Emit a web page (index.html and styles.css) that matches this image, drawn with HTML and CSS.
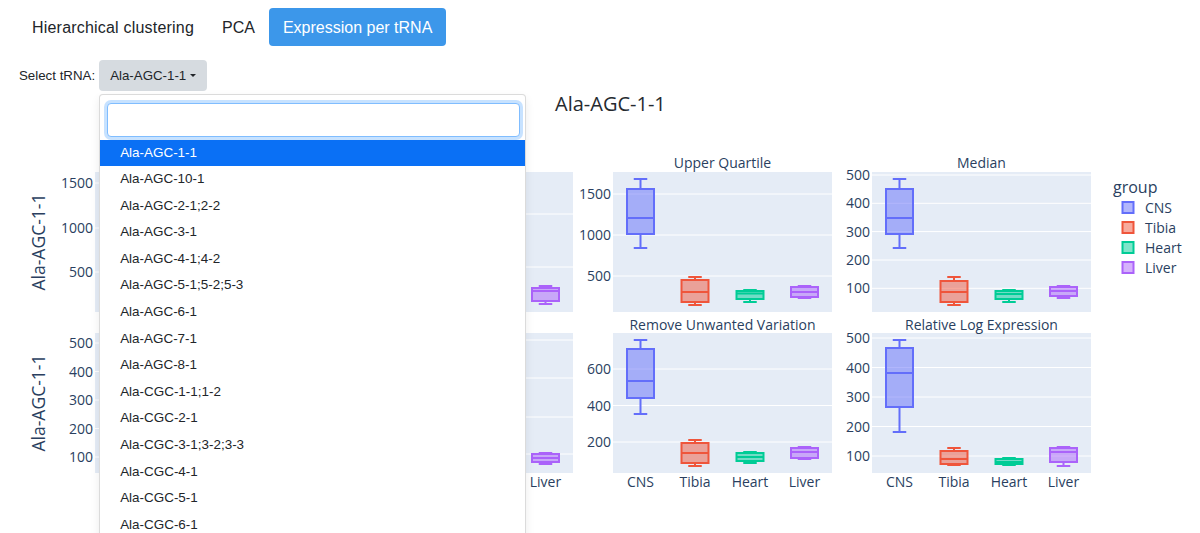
FILE: index.html
```html
<!DOCTYPE html>
<html lang="en">
<head>
<meta charset="utf-8">
<title>tRNA expression</title>
<link rel="stylesheet" href="styles.css">
</head>
<body>
<nav class="tabs">
  <a class="tab tab-wide">Hierarchical clustering</a>
  <a class="tab">PCA</a>
  <a class="tab active">Expression per tRNA</a>
</nav>
<div class="controls">
  <span class="label">Select tRNA:</span>
  <div class="picker">
    <button class="picker-btn">Ala-AGC-1-1<span class="caret"></span></button>
    <div class="menu">
      <div class="search"><input class="search-input" type="text"></div>
      <ul class="options">
        <li class="option selected">Ala-AGC-1-1</li>
        <li class="option">Ala-AGC-10-1</li>
        <li class="option">Ala-AGC-2-1;2-2</li>
        <li class="option">Ala-AGC-3-1</li>
        <li class="option">Ala-AGC-4-1;4-2</li>
        <li class="option">Ala-AGC-5-1;5-2;5-3</li>
        <li class="option">Ala-AGC-6-1</li>
        <li class="option">Ala-AGC-7-1</li>
        <li class="option">Ala-AGC-8-1</li>
        <li class="option">Ala-CGC-1-1;1-2</li>
        <li class="option">Ala-CGC-2-1</li>
        <li class="option">Ala-CGC-3-1;3-2;3-3</li>
        <li class="option">Ala-CGC-4-1</li>
        <li class="option">Ala-CGC-5-1</li>
        <li class="option">Ala-CGC-6-1</li>
      </ul>
    </div>
  </div>
</div>
<div class="figure">
<svg class="chart" width="1200" height="442" viewBox="0 91 1200 442" xmlns="http://www.w3.org/2000/svg">
  <!-- plot backgrounds -->
  <rect class="bg" x="95" y="172" width="219" height="140"/>
  <rect class="bg" x="354" y="172" width="219" height="140"/>
  <rect class="bg" x="613" y="172" width="219" height="140"/>
  <rect class="bg" x="872" y="172" width="219" height="140"/>
  <rect class="bg" x="95" y="333" width="219" height="140"/>
  <rect class="bg" x="354" y="333" width="219" height="140"/>
  <rect class="bg" x="613" y="333" width="219" height="140"/>
  <rect class="bg" x="872" y="333" width="219" height="140"/>

  <!-- gridlines -->
  <path class="grid" d="M95,183H314M95,228H314M95,272H314
    M95,343H314M95,371.5H314M95,400H314M95,428.5H314M95,457H314
    M354,214H573M354,267H573
    M354,340H573M354,378H573M354,417H573M354,454H573
    M613,194H832M613,235H832M613,276H832
    M613,369H832M613,405.5H832M613,442H832
    M872,175H1091M872,203.3H1091M872,231.6H1091M872,260H1091M872,288.3H1091
    M872,338H1091M872,367.5H1091M872,397H1091M872,426.5H1091M872,456H1091"/>

  <!-- main title -->
  <text class="title" x="555" y="111">Ala-AGC-1-1</text>

  <!-- subplot titles -->
  <text class="subtitle" x="722.5" y="168">Upper Quartile</text>
  <text class="subtitle" x="981.5" y="168">Median</text>
  <text class="subtitle" x="722.5" y="330">Remove Unwanted Variation</text>
  <text class="subtitle" x="981.5" y="330">Relative Log Expression</text>

  <!-- y axis titles -->
  <text class="ytitle" transform="translate(44.5,242) rotate(-90)">Ala-AGC-1-1</text>
  <text class="ytitle" transform="translate(44.5,403) rotate(-90)">Ala-AGC-1-1</text>

  <!-- y tick labels -->
  <g class="ytick">
    <text x="93" y="188">1500</text>
    <text x="93" y="233">1000</text>
    <text x="93" y="277">500</text>
    <text x="93" y="348">500</text>
    <text x="93" y="376.5">400</text>
    <text x="93" y="405">300</text>
    <text x="93" y="433.5">200</text>
    <text x="93" y="462">100</text>

    <text x="611" y="199">1500</text>
    <text x="611" y="240">1000</text>
    <text x="611" y="281">500</text>
    <text x="611" y="374">600</text>
    <text x="611" y="410.5">400</text>
    <text x="611" y="447">200</text>

    <text x="870" y="180">500</text>
    <text x="870" y="208.3">400</text>
    <text x="870" y="236.6">300</text>
    <text x="870" y="265">200</text>
    <text x="870" y="293.3">100</text>
    <text x="870" y="343">500</text>
    <text x="870" y="372.5">400</text>
    <text x="870" y="402">300</text>
    <text x="870" y="431.5">200</text>
    <text x="870" y="461">100</text>
  </g>

  <!-- x tick labels -->
  <g class="xtick">
    <text x="545.5" y="487">Liver</text>
    <text x="640.5" y="487">CNS</text>
    <text x="695" y="487">Tibia</text>
    <text x="750" y="487">Heart</text>
    <text x="804.5" y="487">Liver</text>
    <text x="899.5" y="487">CNS</text>
    <text x="954" y="487">Tibia</text>
    <text x="1009" y="487">Heart</text>
    <text x="1063.5" y="487">Liver</text>
  </g>

  <!-- boxes: second column (mostly under the menu) -->
  <path class="box b-liver" d="M532,288H559V301H532Z M532,291H559 M545.5,288V286 M538.75,286H552.25 M545.5,301V304 M538.75,304H552.25"/>
  <path class="box b-liver" d="M532,454H559V462H532Z M532,458H559 M545.5,454V453 M538.75,453H552.25 M545.5,462V464 M538.75,464H552.25"/>

  <!-- Upper Quartile -->
  <path class="box b-cns" d="M627,189H654V234H627Z M627,218H654 M640.5,189V179 M633.75,179H647.25 M640.5,234V248 M633.75,248H647.25"/>
  <path class="box b-tibia" d="M681.5,280H708.5V302H681.5Z M681.5,292H708.5 M695,280V277 M688.25,277H701.75 M695,302V305 M688.25,305H701.75"/>
  <path class="box b-heart" d="M736.5,291H763.5V299H736.5Z M736.5,293.5H763.5 M750,291V290 M743.25,290H756.75 M750,299V302 M743.25,302H756.75"/>
  <path class="box b-liver" d="M791,287H818V297H791Z M791,292H818 M804.5,287V286 M797.75,286H811.25 M804.5,297V298 M797.75,298H811.25"/>

  <!-- Median -->
  <path class="box b-cns" d="M886,189H913V234H886Z M886,218H913 M899.5,189V179 M892.75,179H906.25 M899.5,234V248 M892.75,248H906.25"/>
  <path class="box b-tibia" d="M940.5,281H967.5V302H940.5Z M940.5,292H967.5 M954,281V277 M947.25,277H960.75 M954,302V305 M947.25,305H960.75"/>
  <path class="box b-heart" d="M995.5,291H1022.5V299H995.5Z M995.5,294H1022.5 M1009,291V290 M1002.25,290H1015.75 M1009,299V302 M1002.25,302H1015.75"/>
  <path class="box b-liver" d="M1050,287H1077V296H1050Z M1050,291H1077 M1063.5,287V286 M1056.75,286H1070.25 M1063.5,296V298 M1056.75,298H1070.25"/>

  <!-- Remove Unwanted Variation -->
  <path class="box b-cns" d="M627,349H654V398H627Z M627,381H654 M640.5,349V340 M633.75,340H647.25 M640.5,398V414 M633.75,414H647.25"/>
  <path class="box b-tibia" d="M681.5,443H708.5V463H681.5Z M681.5,453H708.5 M695,443V440 M688.25,440H701.75 M695,463V466 M688.25,466H701.75"/>
  <path class="box b-heart" d="M736.5,453H763.5V461H736.5Z M736.5,457H763.5 M750,453V452 M743.25,452H756.75 M750,461V463 M743.25,463H756.75"/>
  <path class="box b-liver" d="M791,448H818V458H791Z M791,452H818 M804.5,448V447 M797.75,447H811.25 M804.5,458V459 M797.75,459H811.25"/>

  <!-- Relative Log Expression -->
  <path class="box b-cns" d="M886,348H913V407H886Z M886,373H913 M899.5,348V340 M892.75,340H906.25 M899.5,407V432 M892.75,432H906.25"/>
  <path class="box b-tibia" d="M940.5,451H967.5V464H940.5Z M940.5,459H967.5 M954,451V448 M947.25,448H960.75 M954,464V465 M947.25,465H960.75"/>
  <path class="box b-heart" d="M995.5,459H1022.5V464H995.5Z M995.5,462H1022.5 M1009,459V458 M1002.25,458H1015.75 M1009,464V465 M1002.25,465H1015.75"/>
  <path class="box b-liver" d="M1050,448H1077V462H1050Z M1050,452H1077 M1063.5,448V447 M1056.75,447H1070.25 M1063.5,462V466 M1056.75,466H1070.25"/>

  <!-- legend -->
  <text class="legend-title" x="1113" y="192.5">group</text>
  <rect class="box b-cns" x="1122.5" y="202" width="11" height="11"/>
  <text class="legend-item" x="1145" y="212.5">CNS</text>
  <rect class="box b-tibia" x="1122.5" y="222" width="11" height="11"/>
  <text class="legend-item" x="1145" y="232.5">Tibia</text>
  <rect class="box b-heart" x="1122.5" y="242" width="11" height="11"/>
  <text class="legend-item" x="1145" y="252.5">Heart</text>
  <rect class="box b-liver" x="1122.5" y="262" width="11" height="11"/>
  <text class="legend-item" x="1145" y="272.5">Liver</text>
</svg>
</div>
</body>
</html>
```

FILE: styles.css
```css
html, body {
  margin: 0;
  padding: 0;
  overflow: hidden;
  background: #ffffff;
}

body {
  width: 1200px;
  height: 533px;
  font-family: "Liberation Sans", Arial, sans-serif;
  color: #212529;
}

.tabs {
  display: flex;
  margin-top: 8px;
  padding-left: 18px;
}

.tab {
  display: block;
  padding: 9px 14px 7px;
  font-size: 16px;
  line-height: 22px;
  color: #212529;
  border-radius: 4px;
  cursor: pointer;
}

.tab-wide {
  letter-spacing: 0.2px;
}

.tab.active {
  background: #3c97ea;
  color: #ffffff;
}

.controls {
  display: flex;
  align-items: center;
  height: 31px;
  margin-top: 14px;
  padding-left: 19px;
}

.label {
  font-size: 13.3px;
  margin-right: 4px;
}

.picker {
  position: relative;
}

.picker-btn {
  display: flex;
  align-items: center;
  height: 31px;
  padding: 0 11px;
  border: none;
  border-radius: 4px;
  background: #d6dbe0;
  font-family: "Liberation Sans", Arial, sans-serif;
  font-size: 13.3px;
  color: #212529;
}

.caret {
  display: inline-block;
  margin-left: 4px;
  border-top: 3.5px solid #212529;
  border-left: 3px solid transparent;
  border-right: 3px solid transparent;
}

.menu {
  position: absolute;
  z-index: 10;
  top: 34px;
  left: 0;
  width: 427px;
  box-sizing: border-box;
  background: #ffffff;
  border: 1px solid rgba(0, 0, 0, 0.14);
  border-radius: 4px;
  box-shadow: 0 4px 10px rgba(0, 0, 0, 0.08);
}

.search {
  padding: 8px 5px 2.5px 7px;
}

.search-input {
  display: block;
  width: 100%;
  height: 34px;
  box-sizing: border-box;
  border: 1px solid #80bdff;
  border-radius: 4px;
  box-shadow: 0 0 0 3px rgba(0, 123, 255, 0.22);
  outline: none;
  background: #ffffff;
}

.options {
  list-style: none;
  margin: 0;
  padding: 0 0 12px;
}

.option {
  padding: 4px 20px;
  font-size: 13.45px;
  line-height: 18.6px;
  color: #212529;
  white-space: nowrap;
}

.option.selected {
  background: #0a70f5;
  color: #ffffff;
}

.figure {
  width: 1200px;
}

.chart {
  display: block;
  font-family: "Open Sans", "Liberation Sans", sans-serif;
}

.bg {
  fill: #e5ecf6;
}

.grid {
  fill: none;
  stroke: #ffffff;
  stroke-width: 1;
}

.title {
  font-size: 20px;
  fill: #262a30;
}

.subtitle {
  font-size: 14px;
  fill: #2a3f5f;
  text-anchor: middle;
}

.ytitle {
  font-size: 17.5px;
  fill: #2a3f5f;
  text-anchor: middle;
}

.ytick text {
  font-size: 14px;
  fill: #2a3f5f;
  text-anchor: end;
}

.xtick text {
  font-size: 14px;
  fill: #2a3f5f;
  text-anchor: middle;
}

.legend-title {
  font-size: 16px;
  fill: #2a3f5f;
}

.legend-item {
  font-size: 14px;
  fill: #2a3f5f;
}

.box {
  stroke-width: 2;
}

.b-cns {
  stroke: #636efa;
  fill: rgba(99, 110, 250, 0.5);
}

.b-tibia {
  stroke: #ef553b;
  fill: rgba(239, 85, 59, 0.5);
}

.b-heart {
  stroke: #00cc96;
  fill: rgba(0, 204, 150, 0.5);
}

.b-liver {
  stroke: #ab63fa;
  fill: rgba(171, 99, 250, 0.5);
}
```
